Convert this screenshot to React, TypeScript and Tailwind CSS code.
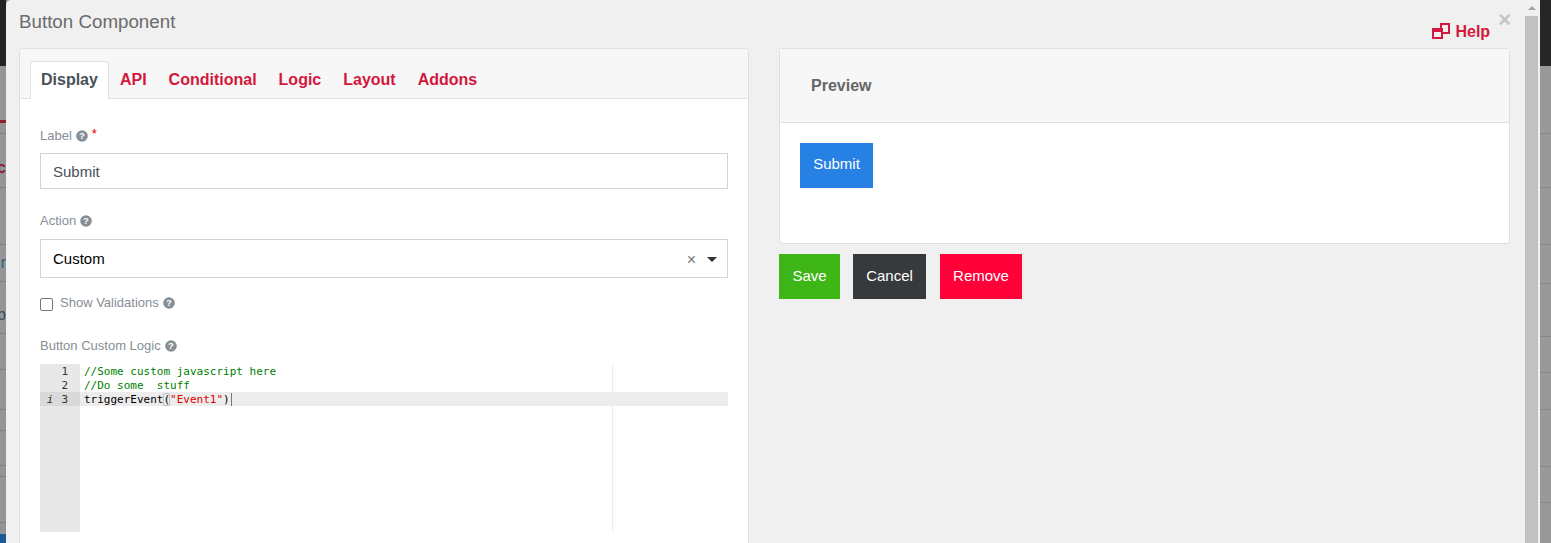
import React from "react";

const tabs = ["API", "Conditional", "Logic", "Layout", "Addons"];

const Hint: React.FC = () => (
  <svg viewBox="0 0 12 12" className="ml-1 h-3 w-3 shrink-0">
    <circle cx="6" cy="6" r="5.8" fill="#868e96" />
    <text x="6" y="9.4" textAnchor="middle" fontSize="9.5" fontWeight="700" fill="#fff" fontFamily="Liberation Sans">?</text>
  </svg>
);

const Field: React.FC<{ label: string; children?: React.ReactNode }> = ({ label, children }) => (
  <div className="flex h-4 items-center text-[13px] text-[#868e96]">
    {label}
    <Hint />
    {children}
  </div>
);

const Code: React.FC = () => (
  <div className="mt-[10px] flex h-[168px] font-['DejaVu_Sans_Mono',monospace] text-[11px] leading-[16px]">
    <div className="w-10 shrink-0 bg-[#e8e8e8] text-[#333]">
      <div className="h-[14px] pr-3 text-right">1</div>
      <div className="h-[14px] pr-3 text-right">2</div>
      <div className="flex h-[14px] justify-end bg-[#d9d9d9] pr-3">
        <span className="mr-2 italic">i</span>3
      </div>
    </div>
    <div className="relative flex-1 bg-white">
      <div className="absolute top-0 bottom-0 left-[532px] w-px bg-[#ececec]" />
      <div className="h-[14px] pl-1 text-[#008000]">//Some custom javascript here</div>
      <div className="h-[14px] pl-1 whitespace-pre text-[#008000]">//Do some  stuff</div>
      <div className="h-[14px] bg-[#ececec] pl-1 text-black">
        triggerEvent<span className="rounded-[2px] outline-1 -outline-offset-1 outline-[#c0c0c0]">(</span>
        <span className="text-[#e00000]">"Event1"</span>)<span className="ml-px border-l border-[#777]" />
      </div>
    </div>
  </div>
);

const LeftStrip: React.FC = () => (
  <div className="flex w-[6px] shrink-0 flex-col overflow-hidden bg-[#959595] text-base whitespace-nowrap">
    <div className="h-[66px] shrink-0 bg-[#232323]" />
    <div className="h-[54px] shrink-0" />
    <div className="h-[3px] shrink-0 bg-[#8c1c2e]" />
    <div className="h-[11px] shrink-0 border-b border-[#808080]" />
    <div className="flex h-[54px] shrink-0 items-center justify-end border-b border-[#808080] pt-[14px] font-bold text-[#8c1c2e]">Ac</div>
    <div className="h-[57px] shrink-0 border-b border-[#808080]" />
    <div className="flex h-[37px] shrink-0 items-center justify-end border-b border-[#808080] text-[#2f6180]">r</div>
    <div className="flex h-[52px] shrink-0 items-center justify-end border-b border-[#808080] pt-[14px] text-[#3c4f5c]">b</div>
    <div className="h-[36px] shrink-0 border-b border-[#808080]" />
    <div className="h-[40px] shrink-0 border-b border-[#808080]" />
    <div className="h-[21px] shrink-0 border-b border-[#808080]" />
    <div className="h-[35px] shrink-0 border-b border-[#808080]" />
    <div className="h-[11px] shrink-0 border-b border-[#808080]" />
    <div className="h-[46px] shrink-0 border-b border-[#808080]" />
    <div className="h-[11px] shrink-0" />
    <div className="flex-1 bg-[#1a5a96]" />
  </div>
);

const RightStrip: React.FC = () => (
  <div className="flex flex-1 flex-col bg-[#999]">
    <div className="h-[66px] shrink-0 bg-[#262626]" />
    <div className="h-[68px] shrink-0 border-b border-[#888]" />
    <div className="h-[54px] shrink-0 border-b border-[#888]" />
    <div className="h-[57px] shrink-0 border-b border-[#888]" />
    <div className="h-[39px] shrink-0 border-b border-[#888]" />
    <div className="h-[53px] shrink-0 border-b border-[#888]" />
    <div className="h-[36px] shrink-0 border-b border-[#888]" />
    <div className="h-[37px] shrink-0 border-b border-[#888]" />
    <div className="h-[57px] shrink-0 border-b border-[#888]" />
    <div className="h-[36px] shrink-0 border-b border-[#888]" />
  </div>
);

export default function App() {
  return (
    <div className="flex h-[543px] w-[1551px] overflow-hidden bg-[#999] font-['Liberation_Sans',sans-serif]">
      <LeftStrip />

      <div className="flex h-full w-[1534px] shrink-0">
        <div className="flex-1 rounded-tl-[5px] bg-[#f0f0f0] pl-[13px]">
          <div className="flex h-12 items-start justify-between">
            <h1 className="mt-[11px] text-[18.75px] leading-[22px] text-[#6b6b6b]">Button Component</h1>
            <div className="flex items-start pr-[14px]">
              <div className="mt-[20px] flex items-center text-base font-bold text-[#d3183d]">
                <svg viewBox="0 0 18 16" className="mr-[5px] mb-[2px] h-4 w-[18px]" fill="none" stroke="currentColor" strokeWidth="2">
                  <rect x="9" y="1" width="8" height="9" />
                  <rect x="1" y="6" width="9" height="9" fill="#f0f0f0" />
                  <rect x="1" y="6" width="9" height="3" fill="currentColor" stroke="none" />
                </svg>
                Help
              </div>
              <span className="mt-[8px] ml-2 text-[22px] leading-6 font-bold text-[#c4c4c4]">×</span>
            </div>
          </div>

          <div className="flex gap-[30px] pr-[15px]">
            <div className="h-[520px] w-[730px] shrink-0 rounded border border-[#dfdfdf] bg-white">
              <div className="flex h-[50px] items-end rounded-t border-b border-[#dee2e6] bg-[#f7f7f7] pl-[10px]">
                <div className="-mb-px flex h-[38px] items-center rounded-t border border-b-0 border-[#dee2e6] bg-white px-[10px] pb-[2px] text-base font-bold text-[#495057]">
                  Display
                </div>
                {tabs.map((t) => (
                  <div key={t} className="flex h-[37px] items-center px-[11px] text-base font-bold text-[#d3183d]">
                    {t}
                  </div>
                ))}
              </div>

              <div className="px-5 pt-[29px]">
                <Field label="Label">
                  <span className="mt-[-5px] ml-1 text-[#e00000]">*</span>
                </Field>
                <div className="mt-[9px] flex h-9 items-center border border-[#ced4da] bg-white px-3 pt-[2px] text-[15px] text-[#495057]">Submit</div>

                <div className="mt-[24px]">
                  <Field label="Action" />
                </div>
                <div className="mt-[10px] flex h-[39px] items-center border border-[#d3d3d3] bg-white pt-[2px] pr-[10px] pl-3 text-[15px] text-black">
                  <span className="flex-1">Custom</span>
                  <span className="mr-[11px] text-base leading-none text-[#777]">×</span>
                  <span className="h-0 w-0 border-x-[5px] border-t-[5px] border-x-transparent border-t-[#333]" />
                </div>

                <div className="mt-[17px] flex h-4 items-center text-[13px] text-[#868e96]">
                  <span className="mt-[3px] mr-[7px] h-[13px] w-[13px] rounded-[2px] border border-[#767676] bg-white" />
                  Show Validations
                  <Hint />
                </div>

                <div className="mt-[27px]">
                  <Field label="Button Custom Logic" />
                </div>
                <Code />
              </div>
            </div>

            <div className="flex-1">
              <div className="h-[196px] rounded border border-[#dfdfdf] bg-white">
                <div className="flex h-[74px] items-center border-b border-[#dfdfdf] bg-[#f7f7f7] pl-[31px] text-base font-bold text-[#666]">Preview</div>
                <div className="p-5">
                  <div className="flex h-[45px] w-[73px] items-center justify-center bg-[#2780e3] pb-[2px] text-[15px] text-white">Submit</div>
                </div>
              </div>
              <div className="mt-[10px] flex text-[15px] text-white">
                <div className="flex h-[45px] w-[61px] items-center justify-center bg-[#3fb618]">Save</div>
                <div className="ml-[13px] flex h-[45px] w-[73px] items-center justify-center bg-[#373a3c]">Cancel</div>
                <div className="ml-[14px] flex h-[45px] w-[82px] items-center justify-center bg-[#ff0039]">Remove</div>
              </div>
            </div>
          </div>
        </div>

        <div className="flex w-[15px] shrink-0 flex-col bg-[#f1f1f1]">
          <div className="mt-[6px] ml-[3px] h-0 w-0 border-x-[4px] border-b-[4px] border-x-transparent border-b-[#a3a3a3]" />
          <div className="mt-[6px] h-full w-[13px] bg-[#c1c1c1]" />
        </div>
      </div>

      <RightStrip />
    </div>
  );
}
